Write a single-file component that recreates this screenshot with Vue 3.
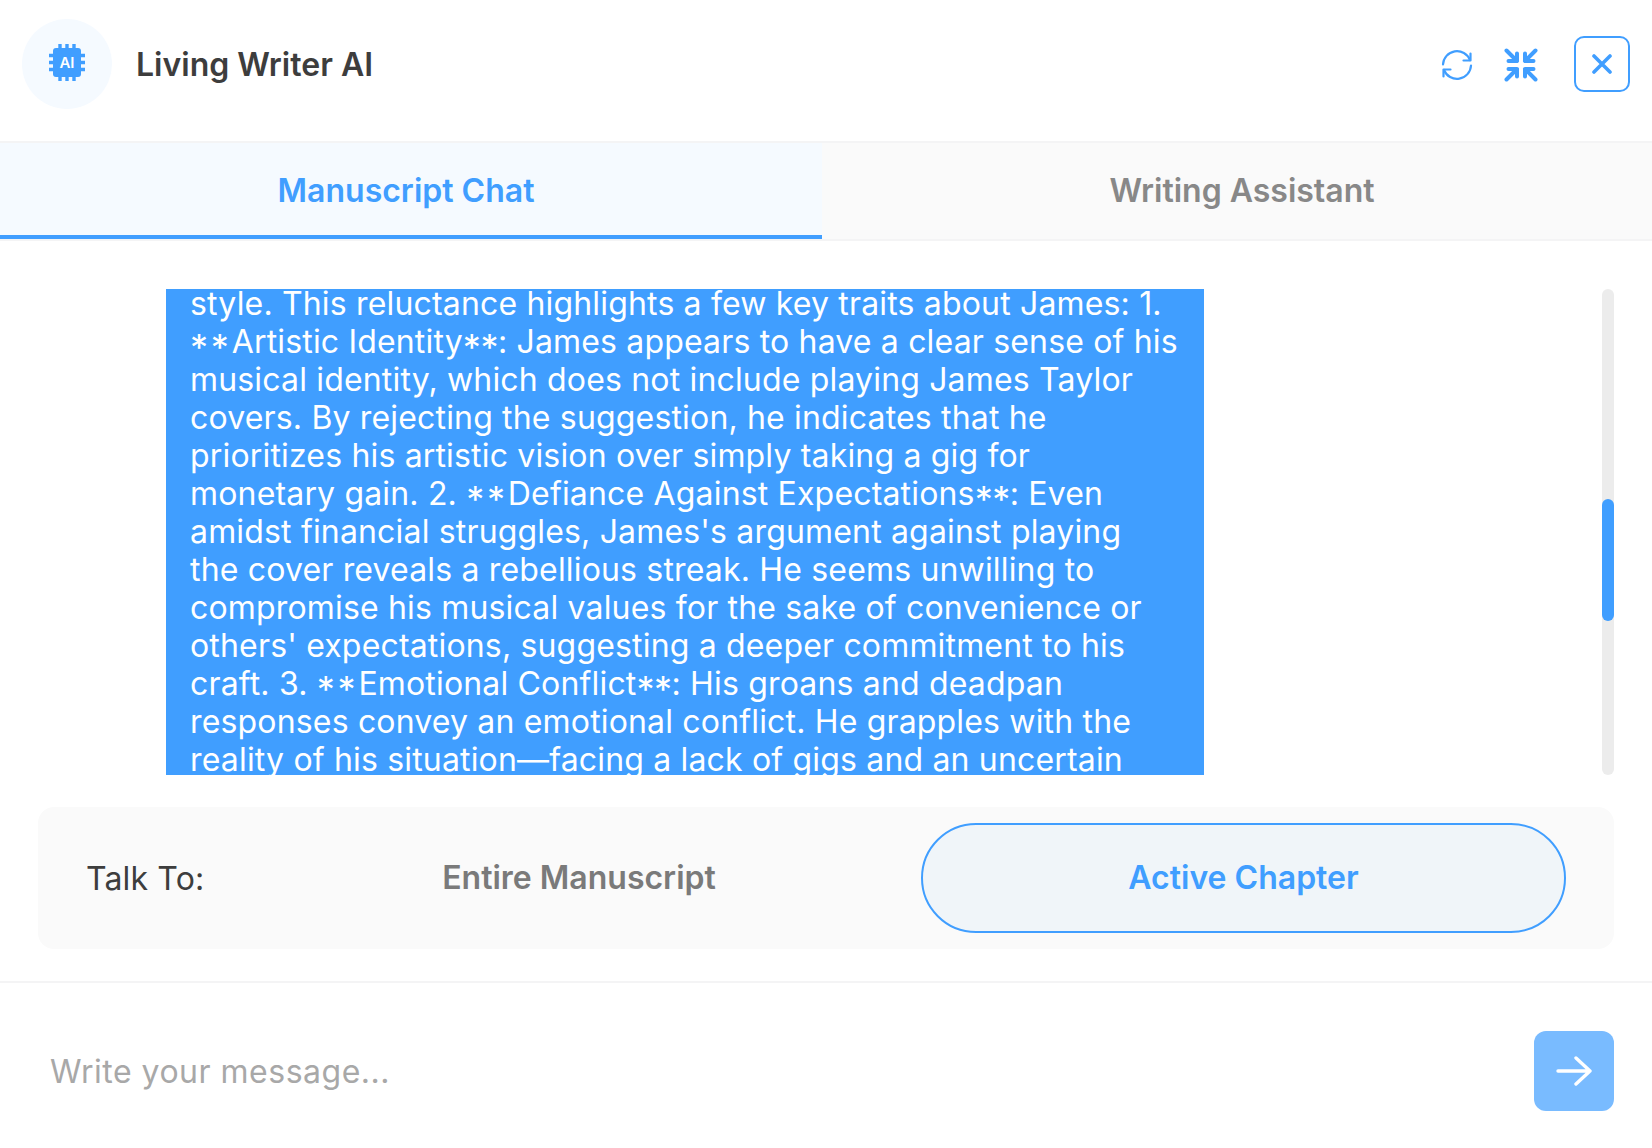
<script setup>
const lines = [
  "style. This reluctance highlights a few key traits about James: 1.",
  "**Artistic Identity**: James appears to have a clear sense of his",
  "musical identity, which does not include playing James Taylor",
  "covers. By rejecting the suggestion, he indicates that he",
  "prioritizes his artistic vision over simply taking a gig for",
  "monetary gain. 2. **Defiance Against Expectations**: Even",
  "amidst financial struggles, James's argument against playing",
  "the cover reveals a rebellious streak. He seems unwilling to",
  "compromise his musical values for the sake of convenience or",
  "others' expectations, suggesting a deeper commitment to his",
  "craft. 3. **Emotional Conflict**: His groans and deadpan",
  "responses convey an emotional conflict. He grapples with the",
  "reality of his situation—facing a lack of gigs and an uncertain",
].map((line) => line.split("**"));
</script>

<template>
  <div class="panel">
    <header class="head">
      <div class="brand">
        <span class="logo">
          <svg class="chip" width="36" height="37" viewBox="0 0 36 37">
            <rect x="4" y="4" width="28" height="29" rx="3" fill="#409eff" />
            <path stroke="#409eff" stroke-width="3.4" d="M11 0v6M18 0v6M25 0v6M11 31v6M18 31v6M25 31v6M0 11.5h6M0 18.5h6M0 25.5h6M30 11.5h6M30 18.5h6M30 25.5h6" />
            <text x="18" y="24" text-anchor="middle" class="chip-text">AI</text>
          </svg>
        </span>
        <h1 class="title">Living Writer AI</h1>
      </div>
      <div class="actions">
        <svg class="tool" width="32" height="32" viewBox="0 0 32 32" fill="none" stroke="#409eff" stroke-width="2.2" stroke-linecap="round" stroke-linejoin="round">
          <path d="M2 15.5A14 14 0 0 1 29 11" />
          <path d="M30 16.5A14 14 0 0 1 3 21" />
          <path d="M29.5 4.5V11.5H22.5" />
          <path d="M2.5 27.5V20.5H9.5" />
        </svg>
        <svg class="tool" width="34" height="34" viewBox="0 0 34 34" fill="none" stroke="#409eff" stroke-width="4" stroke-linecap="round" stroke-linejoin="round">
          <path d="M2.5 2.5L13 13M13 5.5V13H4.5" />
          <path d="M31.5 2.5L21 13M21 5.5V13H29.5" />
          <path d="M2.5 31.5L13 21M13 28.5V21H4.5" />
          <path d="M31.5 31.5L21 21M21 28.5V21H29.5" />
        </svg>
        <button class="close">
          <svg width="20" height="20" viewBox="0 0 20 20" fill="none" stroke="#409eff" stroke-width="3.6" stroke-linecap="round">
            <path d="M2 2L18 18M18 2L2 18" />
          </svg>
        </button>
      </div>
    </header>

    <nav class="tabs">
      <div class="tab active">Manuscript Chat</div>
      <div class="tab second">Writing Assistant</div>
    </nav>

    <section class="chat">
      <div class="viewport">
        <div class="bubble">
          <p v-for="(parts, n) in lines" :key="n" class="msg"><template v-for="(p, i) in parts" :key="i"><span v-if="i > 0" class="stars" :class="i % 2 ? 'open' : 'shut'">**</span>{{ p }}</template></p>
        </div>
      </div>
      <div class="track"><div class="thumb"></div></div>
    </section>

    <div class="talk">
      <span class="talk-label">Talk To:</span>
      <div class="option">Entire Manuscript</div>
      <div class="option selected">Active Chapter</div>
    </div>

    <footer class="composer">
      <input class="field" placeholder="Write your message..." />
      <button class="send">
        <svg width="36" height="30" viewBox="0 0 36 30" fill="none" stroke="#fff" stroke-width="3.4" stroke-linecap="round" stroke-linejoin="round">
          <path d="M2 15H34M20 2L34 15L20 28" />
        </svg>
      </button>
    </footer>
  </div>
</template>

<style>
html, body { margin: 0; background: #fff; }
</style>

<style scoped>
.panel {
  width: 1652px;
  height: 1148px;
  overflow: hidden;
  font-family: Inter, "Liberation Sans", sans-serif;
  background: #fff;
  display: flex;
  flex-direction: column;
}
.head {
  height: 141px;
  box-sizing: content-box;
  border-bottom: 2px solid #f4f4f5;
  display: flex;
  align-items: center;
  justify-content: space-between;
  padding: 0 22px 0 22px;
}
.brand { display: flex; align-items: center; gap: 24px; margin-top: -14px; }
.logo {
  width: 90px;
  height: 90px;
  border-radius: 50%;
  background: #f5faff;
  display: flex;
  align-items: center;
  justify-content: center;
}
.chip { margin-top: -2px; }
.chip-text { font: 600 15px Inter, sans-serif; fill: #fff; }
.title { margin: 0 0 -2px; font-size: 32px; font-weight: 600; color: #3d3d3d; }
.actions { display: flex; align-items: center; margin-top: -12px; }
.tool { display: block; }
.tool + .tool { margin-left: 31px; }
.close {
  margin: -2px 0 0 36px;
  width: 56px;
  height: 56px;
  box-sizing: border-box;
  border: 2px solid #409eff;
  border-radius: 10px;
  background: #fff;
  padding: 0;
  display: flex;
  align-items: center;
  justify-content: center;
}
.tabs { display: flex; height: 98px; background: #fafafa; border-bottom: 2px solid #f4f4f5; box-sizing: border-box; }
.tab {
  flex: 1;
  display: flex;
  align-items: center;
  justify-content: center;
  font-size: 32px;
  font-weight: 600;
  color: #888;
}
.tab.active {
  flex: 0 0 822px;
  height: 96px;
  box-sizing: border-box;
  padding: 2px 10px 0 0;
  color: #409eff;
  background: #f5faff;
  border-bottom: 4px solid #409eff;
}
.tab.second { padding-left: 10px; padding-bottom: 1px; }
.chat {
  display: flex;
  margin-top: 48px;
  height: 486px;
  padding: 0 38px 0 166px;
}
.viewport { width: 1038px; height: 486px; overflow: hidden; background: #409eff; }
.bubble { padding: 0 0 0 24px; margin-top: -4px; }
.msg { margin: 0; color: #fff; font-size: 32px; line-height: 38px; letter-spacing: 0.17px; white-space: nowrap; }
.stars { position: relative; top: 7px; line-height: 0; font-size: 36px; }
.stars.open { letter-spacing: 2.8px; }
.stars.shut { letter-spacing: -0.5px; }
.track {
  position: relative;
  margin-left: auto;
  width: 12px;
  height: 486px;
  border-radius: 6px;
  background: #ececec;
}
.thumb {
  position: absolute;
  top: 210px;
  left: 0;
  width: 12px;
  height: 122px;
  border-radius: 6px;
  background: #409eff;
}
.talk {
  margin: 32px 38px 0;
  height: 142px;
  box-sizing: border-box;
  padding: 16px 48px;
  border-radius: 16px;
  background: #fafafa;
  display: flex;
  align-items: stretch;
}
.talk-label { flex: 0 0 171px; align-self: center; font-size: 32px; color: #3d3d3d; letter-spacing: 0.15px; }
.option {
  flex: 0 0 644px;
  box-sizing: border-box;
  display: flex;
  align-items: center;
  justify-content: center;
  padding-bottom: 2px;
  font-size: 32px;
  font-weight: 600;
  color: #7a7a7a;
  border: 2px solid transparent;
  border-radius: 55px;
}
.option.selected { flex-basis: 645px; margin-left: 20px; color: #409eff; border-color: #409eff; background: #f0f5f9; }
.composer {
  margin-top: 32px;
  border-top: 2px solid #f4f4f5;
  flex: 1;
  display: flex;
  align-items: flex-start;
  padding: 48px 38px 0 50px;
}
.field {
  flex: 1;
  height: 80px;
  border: 0;
  outline: 0;
  padding: 0;
  font: 400 32px Inter, sans-serif;
  letter-spacing: 0.5px;
  color: #3d3d3d;
  background: transparent;
}
.field::placeholder { color: #a8a8a8; opacity: 1; }
.send {
  width: 80px;
  height: 80px;
  border: 0;
  border-radius: 12px;
  background: #79bbff;
  padding: 0;
  display: flex;
  align-items: center;
  justify-content: center;
}
</style>
